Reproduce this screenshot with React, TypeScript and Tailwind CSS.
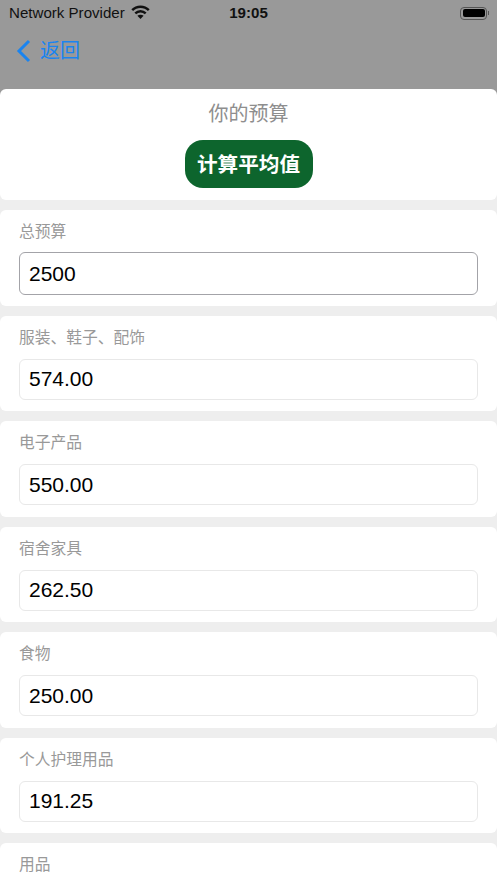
const sans = '"Liberation Sans", "Noto Sans CJK SC", sans-serif';

const categories = [
  { label: '总预算', value: '2500', focused: true },
  { label: '服装、鞋子、配饰', value: '574.00' },
  { label: '电子产品', value: '550.00' },
  { label: '宿舍家具', value: '262.50' },
  { label: '食物', value: '250.00' },
  { label: '个人护理用品', value: '191.25' },
  { label: '用品', value: '' },
];

function StatusBar() {
  return (
    <div className="relative flex h-[26px] items-center pl-[9px] pr-[8px] text-[#111] text-[15.100px]">
      <span>Network Provider</span>
      <svg className="ml-[6px] mb-[1px]" width="19" height="15" viewBox="0 0 19 15" fill="none" stroke="#111" strokeWidth="2.400">
        <path d="M1.200 5.200C3.300 3 6.200 1.700 9.500 1.700s6.200 1.300 8.300 3.500" />
        <path d="M4.300 8.400C5.700 7 7.500 6.200 9.500 6.200s3.800.8 5.200 2.200" />
        <path d="M9.500 14 6.400 10.800c.8-.7 1.900-1.100 3.100-1.100s2.300.4 3.100 1.100z" fill="#111" stroke="none" />
      </svg>
      <span className="absolute left-0 right-0 top-[4px] text-center font-bold leading-[18px]">19:05</span>
      <div className="ml-auto flex items-center">
        <div className="h-[13px] w-[27px] rounded-[4px] border border-[#555] p-[1.500px]">
          <div className="h-full w-full rounded-[2px] bg-black" />
        </div>
        <div className="ml-[1px] h-[4px] w-[1px] bg-[#555]" />
      </div>
    </div>
  );
}

export default function App() {
  return (
    <div className="h-[883px] overflow-hidden bg-[#eeeeee]" style={{ fontFamily: sans }}>
      <div className="h-[100px] bg-[#999999]">
        <StatusBar />
        <div className="flex h-[50px] items-center pl-[16px] text-[#1a84f0]">
          <svg width="15" height="24" viewBox="0 0 15 24" fill="none" stroke="currentColor" strokeWidth="3">
            <path d="M13 2 3 12l10 10" />
          </svg>
          <span className="ml-[9px] text-[20px] leading-none">返回</span>
        </div>
      </div>

      <div className="-mt-[11px] flex h-[111px] flex-col items-center rounded-[6px] bg-white">
        <div className="mt-[12px] text-[20px] leading-[27px] text-[#8e8e8e]">你的预算</div>
        <button className="mt-[12px] h-[48px] w-[128px] rounded-[18px] bg-[#0d652d] pt-[3px] text-[20.600px] font-bold text-white">
          计算平均值
        </button>
      </div>

      {categories.map((item) => (
        <div key={item.label} className="mt-[10px] h-[95.500px] rounded-[6px] bg-white px-[19px] pt-[11px]">
          <div className="text-[15.750px] leading-[21px] text-[#999999]">{item.label}</div>
          {item.value && (
            <div
              className={
                item.focused
                  ? 'mt-[10px] flex h-[43px] items-center rounded-[6px] border border-[#a3a3a8] pl-[9px] text-[21px] text-black'
                  : 'mt-[11px] flex h-[41px] items-center rounded-[6px] border border-[#e8e8e8] pl-[9px] text-[21px] text-black'
              }
            >
              {item.value}
            </div>
          )}
        </div>
      ))}
    </div>
  );
}
